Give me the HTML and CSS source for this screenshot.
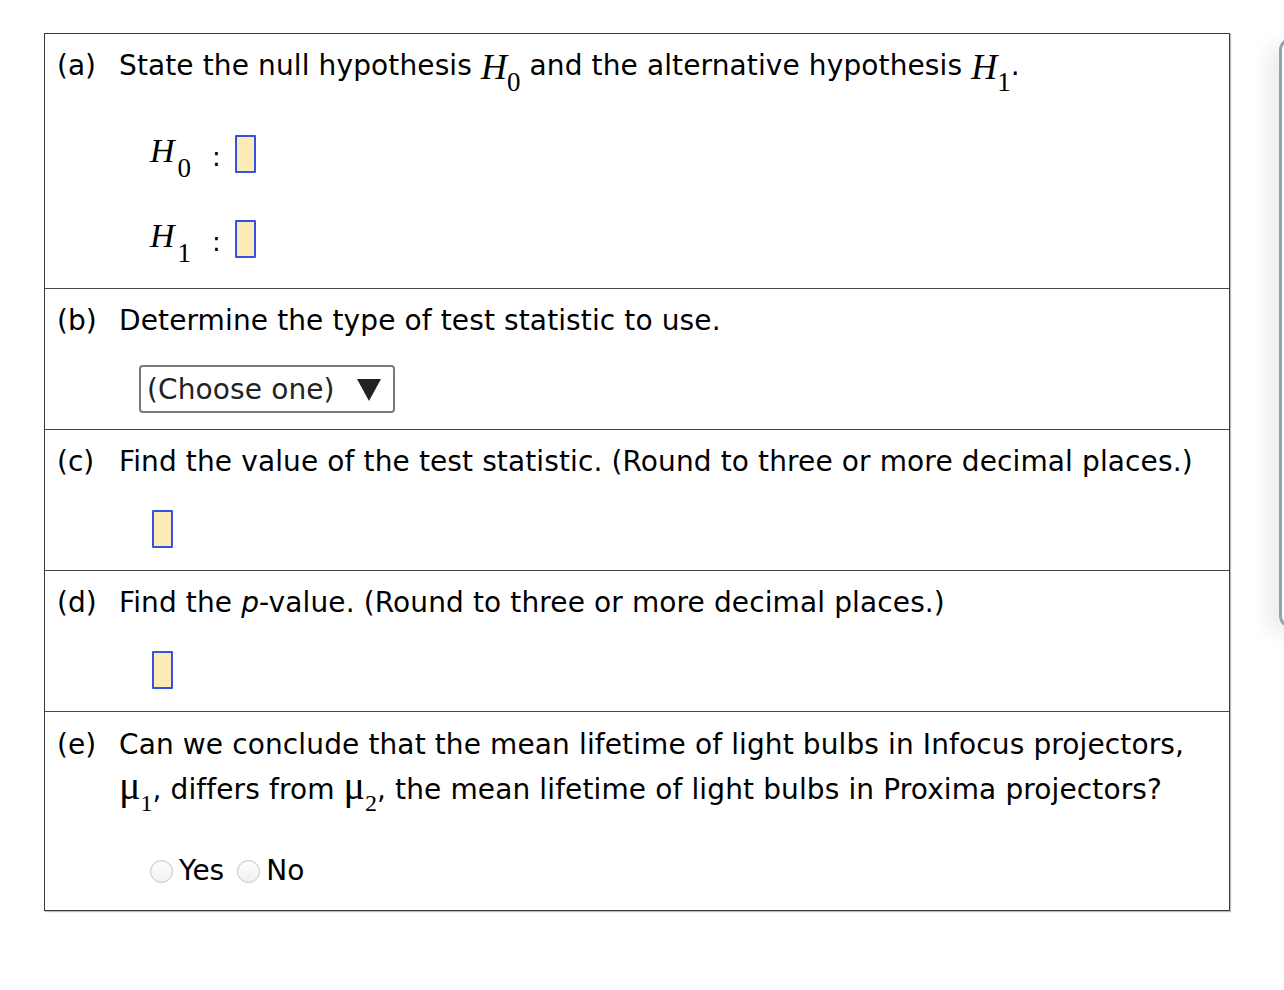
FILE: index.html
```html
<!DOCTYPE html>
<html>
<head>
<meta charset="utf-8">
<link rel="stylesheet" href="styles.css">
</head>
<body>
<div class="sheet">
  <div class="row row-a">
    <div class="q"><span class="lbl">(a)</span><span class="txt">State the null hypothesis <span class="m">H<sub class="ms">0</sub></span> and the alternative hypothesis <span class="m">H<sub class="ms">1</sub></span>.</span></div>
    <div class="hyp first">
      <span class="mi">H</span><span class="mis">0</span><span class="colon">:</span><span class="box"></span>
    </div>
    <div class="hyp">
      <span class="mi">H</span><span class="mis">1</span><span class="colon">:</span><span class="box"></span>
    </div>
  </div>
  <div class="row row-b">
    <div class="q"><span class="lbl">(b)</span><span class="txt">Determine the type of test statistic to use.</span></div>
    <div class="select"><span class="sel-text">(Choose one)</span><svg class="arrow" width="24" height="22" viewBox="0 0 24 22"><polygon points="0,0 24,0 12,22" fill="#222"/></svg></div>
  </div>
  <div class="row row-c">
    <div class="q"><span class="lbl">(c)</span><span class="txt">Find the value of the test statistic. (Round to three or more decimal places.)</span></div>
    <div class="answer"><span class="box"></span></div>
  </div>
  <div class="row row-d">
    <div class="q"><span class="lbl">(d)</span><span class="txt">Find the <i>p</i>-value. (Round to three or more decimal places.)</span></div>
    <div class="answer"><span class="box"></span></div>
  </div>
  <div class="row row-e">
    <div class="q qe"><span class="lbl">(e)</span><span class="txt">Can we conclude that the mean lifetime of light bulbs in Infocus projectors,<br><span class="mu">μ<sub class="mus">1</sub></span>, differs from <span class="mu">μ<sub class="mus">2</sub></span>, the mean lifetime of light bulbs in Proxima projectors?</span></div>
    <div class="choices">
      <span class="radio"></span><span class="opt">Yes</span>
      <span class="radio r2"></span><span class="opt">No</span>
    </div>
  </div>
</div>
<div class="side"></div>
</body>
</html>
```

FILE: styles.css
```css
html, body {
  margin: 0;
  padding: 0;
  background: #fff;
}
body {
  font-family: "DejaVu Sans", Verdana, sans-serif;
  color: #000;
  position: relative;
  height: 990px;
  overflow: hidden;
}
.sheet {
  margin: 33px 0 0 44px;
  width: 1184px;
  border: 1px solid #3a3a3a;
  box-shadow: 1px 1px 1px #bdbdbd;
}
.row {
  box-sizing: border-box;
  padding: 14px 0 0 12px;
  border-top: 1px solid #4a4a4a;
}
.row-a { border-top: none; height: 254px; }
.row-b { height: 141px; }
.row-c { height: 141px; }
.row-d { height: 141px; }
.row-e { height: 199px; padding-top: 10px; }

.q {
  display: flex;
  font-size: 28px;
  line-height: 36px;
  letter-spacing: 0.12px;
}
.qe { line-height: 45px; }
.lbl {
  flex: 0 0 62px;
  letter-spacing: 0;
}
.txt { white-space: nowrap; }

.m {
  font-family: "Liberation Serif", "Times New Roman", serif;
  font-style: italic;
  font-size: 36px;
  line-height: 0;
  vertical-align: -4px;
  letter-spacing: 0;
}
.ms {
  font-style: normal;
  font-size: 27px;
  line-height: 0;
  vertical-align: -12px;
}
.mu {
  font-family: "Liberation Serif", "Times New Roman", serif;
  font-size: 40px;
  line-height: 0;
  letter-spacing: 0;
}
.mus {
  font-size: 24px;
  line-height: 0;
  vertical-align: -12px;
}

.hyp {
  display: flex;
  align-items: flex-start;
  height: 85px;
  margin-left: 93px;
}
.hyp.first { margin-top: 45px; }
.mi {
  font-family: "Liberation Serif", "Times New Roman", serif;
  font-style: italic;
  font-size: 34px;
  line-height: 34px;
  margin-top: 5px;
}
.mis {
  font-family: "Liberation Serif", "Times New Roman", serif;
  font-size: 27px;
  line-height: 27px;
  margin-top: 26px;
  margin-left: 3px;
}
.colon {
  font-size: 26px;
  line-height: 26px;
  margin-top: 15px;
  margin-left: 21px;
}
.hyp .box {
  margin-top: 6px;
  margin-left: 14px;
}
.box {
  display: block;
  box-sizing: border-box;
  width: 21px;
  height: 38px;
  background: #fcebb7;
  border: 2px solid #3552e3;
  border-radius: 1px;
}
.answer {
  margin: 30px 0 0 95px;
}

.select {
  box-sizing: border-box;
  width: 256px;
  height: 48px;
  margin: 26px 0 0 82px;
  border: 2px solid #7a7a7a;
  border-radius: 4px;
  display: flex;
  align-items: center;
  padding-left: 6px;
  font-size: 28px;
  letter-spacing: 0.12px;
  color: #222;
}
.sel-text { line-height: 36px; margin-top: 2px; }
.arrow {
  margin-left: 22px;
  margin-top: 2px;
}

.choices {
  display: flex;
  align-items: center;
  height: 36px;
  margin: 41px 0 0 93px;
  font-size: 28px;
}
.radio {
  box-sizing: border-box;
  width: 23px;
  height: 23px;
  border-radius: 50%;
  border: 1px solid #c4c4c4;
  background: linear-gradient(#ffffff, #f0f0f0);
  box-shadow: inset 0 1px 1px rgba(0,0,0,0.05);
  margin-right: 6px;
}
.r2 { margin-left: 13px; }
.opt { line-height: 36px; }

.side {
  position: absolute;
  left: 1279px;
  top: 38px;
  width: 30px;
  height: 590px;
  box-sizing: border-box;
  border: 3px solid #8fa4ad;
  border-radius: 12px;
  box-shadow: -12px 6px 18px rgba(0,0,0,0.07);
}
```
